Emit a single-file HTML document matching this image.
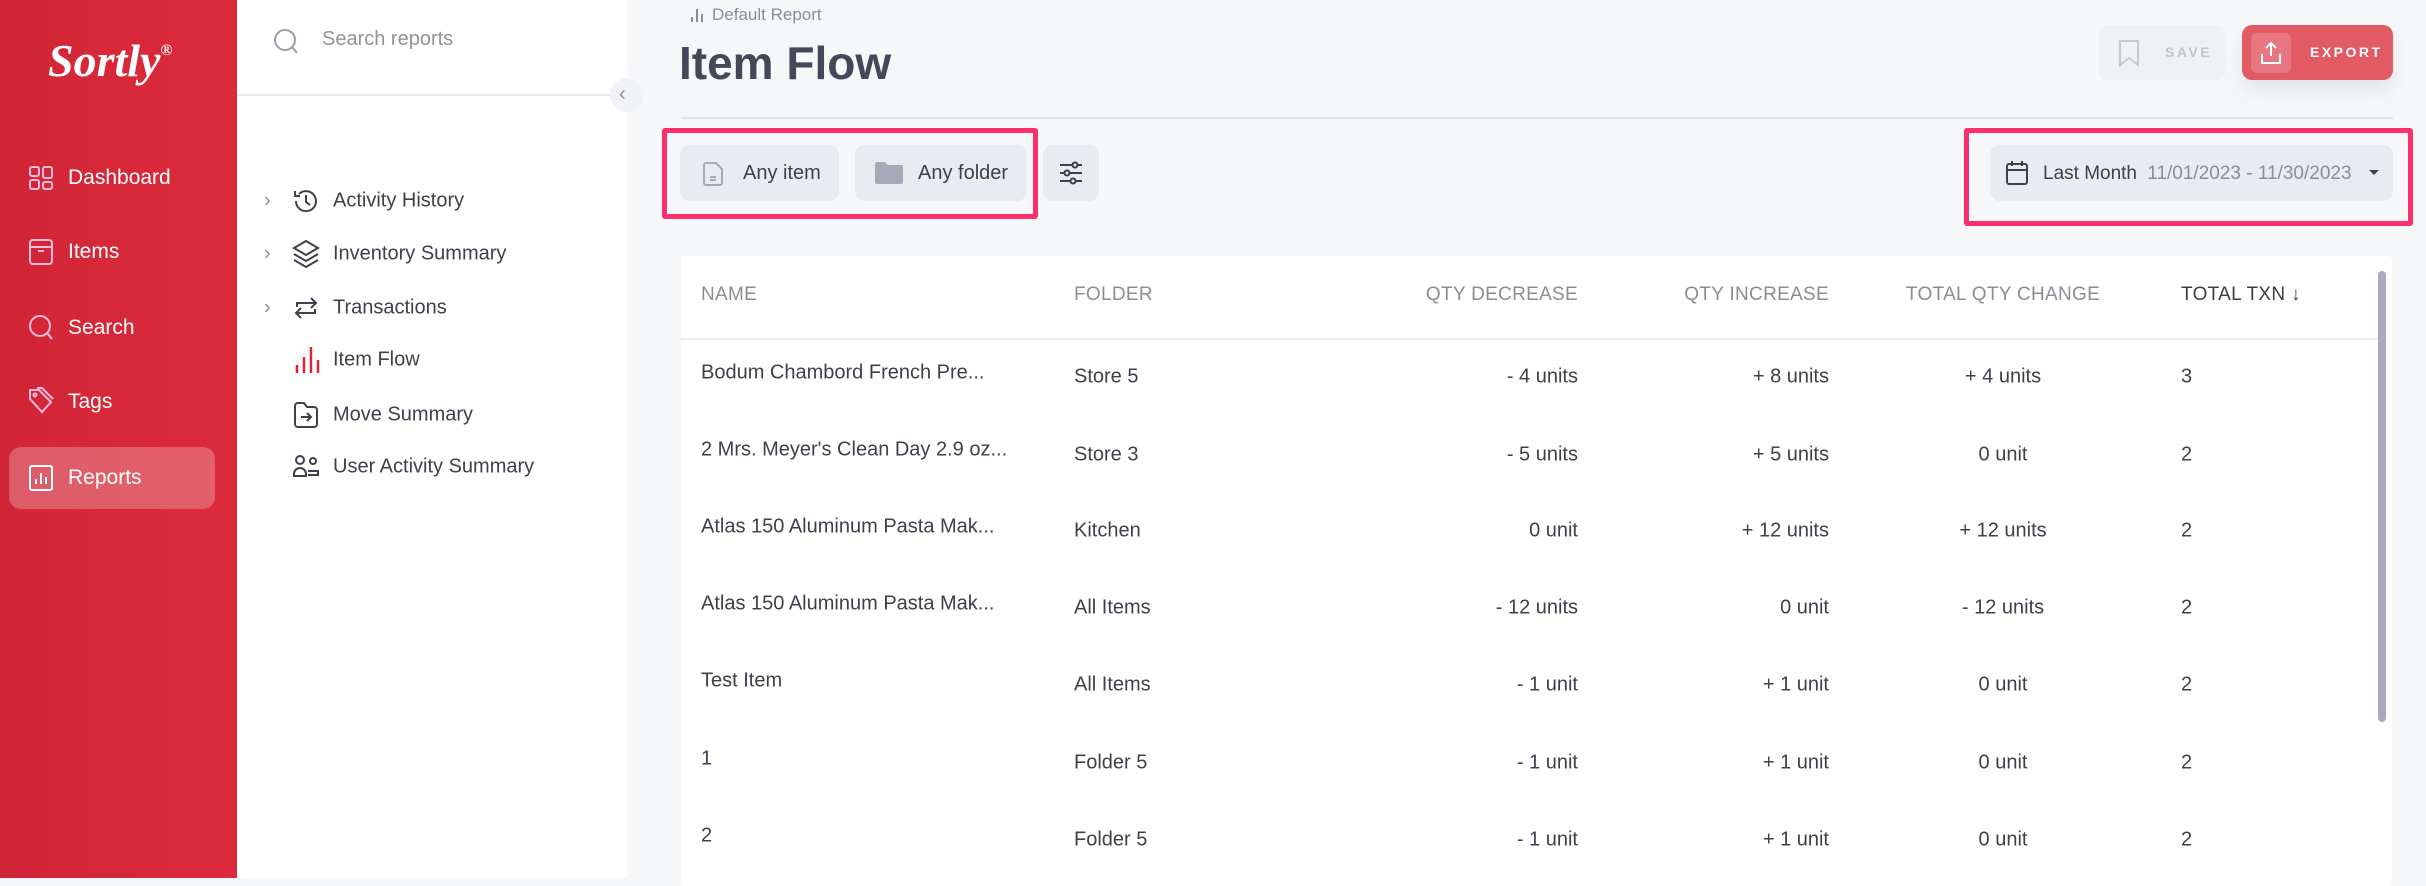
<!DOCTYPE html>
<html><head><meta charset="utf-8"><style>
*{margin:0;padding:0;box-sizing:border-box}
body{width:2426px;height:878px;overflow:hidden;background:#f5f7f9;font-family:"Liberation Sans",sans-serif;position:relative;color:#3d404d}
.a{position:absolute;white-space:nowrap}
.side{left:0;top:0;width:237px;height:878px;background:linear-gradient(90deg,#d12637,#dc2a3b)}
.nav{left:68px;color:#fff;font-size:21px;transform:translateY(-50%)}
.ni{left:28px;transform:translateY(-50%)}
.panel{left:237px;top:0;width:390px;height:878px;background:#fff}
.rl{left:333px;font-size:20px;color:#3d404d;transform:translateY(-50%)}
.ri{left:292px;transform:translateY(-50%)}
.chev{left:264px;transform:translateY(-50%)}
.btn{background:#e9ebf1;border-radius:10px}
.th{top:295px;transform:translateY(-50%);font-size:19px;color:#8a8d99;letter-spacing:.3px}
.td{transform:translateY(-50%);font-size:20px;color:#3d404d}
.r{text-align:right}
</style></head><body>
<div class="a side"></div>
<div class="a" style="left:48px;top:34px;color:#fff;font-family:'Liberation Serif',serif;font-style:italic;font-weight:bold;font-size:46px">Sortly<span style="font-size:16px;vertical-align:top;position:relative;top:8px">®</span></div>
<div class="a" style="left:9px;top:447px;width:206px;height:62px;border-radius:12px;background:rgba(255,255,255,.25)"></div>
<svg class="a ni" style="top:178px" width="26" height="26" viewBox="0 0 26 26" fill="none" stroke="#fbd" stroke-width="2"><rect x="2" y="2" width="9" height="9" rx="2"/><rect x="15" y="2" width="9" height="11" rx="2"/><rect x="2" y="15" width="9" height="9" rx="2"/><rect x="15" y="17" width="9" height="7" rx="2"/></svg>
<div class="a nav" style="top:178px">Dashboard</div>
<svg class="a ni" style="top:252px" width="26" height="28" viewBox="0 0 26 28" fill="none" stroke="#fbd" stroke-width="2"><rect x="2" y="2" width="22" height="24" rx="3"/><path d="M2 9h22M10 13h6"/></svg>
<div class="a nav" style="top:252px">Items</div>
<svg class="a ni" style="top:328px" width="26" height="28" viewBox="0 0 26 28" fill="none" stroke="#fbd" stroke-width="2"><circle cx="12" cy="12" r="10"/><path d="M19 19l5 6"/></svg>
<div class="a nav" style="top:328px">Search</div>
<svg class="a ni" style="top:402px" width="26" height="30" viewBox="0 0 26 30" fill="none" stroke="#fbd" stroke-width="2"><path d="M2 12V3h9l12 12-9 10z"/><circle cx="7" cy="8" r="1.5"/><path d="M9 1h5l11 11"/></svg>
<div class="a nav" style="top:402px">Tags</div>
<svg class="a ni" style="top:478px" width="26" height="28" viewBox="0 0 26 28" fill="none" stroke="#fff" stroke-width="2"><rect x="2" y="2" width="22" height="24" rx="2"/><path d="M8 20v-5M13 20V9M18 20v-7"/></svg>
<div class="a nav" style="top:478px">Reports</div>

<div class="a panel"></div>
<svg class="a" style="left:273px;top:28px" width="26" height="28" viewBox="0 0 26 28" fill="none" stroke="#9a9dab" stroke-width="2"><circle cx="12" cy="12" r="10"/><path d="M19 19l5 6"/></svg>
<div class="a" style="left:322px;top:28px;font-size:20px;color:#8f92a0">Search reports</div>
<div class="a" style="left:237px;top:94px;width:390px;height:2px;background:#e6e8ec"></div>
<div class="a" style="left:610px;top:78px;width:34px;height:34px;border-radius:50%;background:#f0f2f5"></div>
<div class="a" style="left:619px;top:83px;font-size:20px;color:#8a8d99">‹</div>
<div class="a chev" style="top:201px;color:#8a8d99;font-size:20px">›</div>
<div class="a chev" style="top:254px;color:#8a8d99;font-size:20px">›</div>
<div class="a chev" style="top:308px;color:#8a8d99;font-size:20px">›</div>
<svg class="a ri" style="top:201px" width="28" height="28" viewBox="0 0 28 28" fill="none" stroke="#3d404d" stroke-width="2"><path d="M4 14a10 10 0 1 0 3-7M3 4v5h5M14 8v7l4 3"/></svg>
<div class="a rl" style="top:201px">Activity History</div>
<svg class="a ri" style="top:254px" width="28" height="30" viewBox="0 0 28 30" fill="none" stroke="#3d404d" stroke-width="2"><path d="M14 2L2 9l12 7 12-7z"/><path d="M2 15l12 7 12-7M2 21l12 7 12-7"/></svg>
<div class="a rl" style="top:254px">Inventory Summary</div>
<svg class="a ri" style="top:308px" width="28" height="30" viewBox="0 0 28 30" fill="none" stroke="#3d404d" stroke-width="2"><path d="M5 14V10h18M19 5l5 5-5 5M23 16v4H5M9 25l-5-5 5-5"/></svg>
<div class="a rl" style="top:308px">Transactions</div>
<svg class="a ri" style="top:360px" width="28" height="30" viewBox="0 0 28 30" fill="none" stroke="#d6283a" stroke-width="2.5"><path d="M5 28v-8M12 28V12M19 28V2M26 28v-13"/></svg>
<div class="a rl" style="top:360px">Item Flow</div>
<svg class="a ri" style="top:415px" width="28" height="30" viewBox="0 0 28 30" fill="none" stroke="#3d404d" stroke-width="2"><path d="M3 6a3 3 0 0 1 3-3h6l3 4h7a3 3 0 0 1 3 3v14a3 3 0 0 1-3 3H6a3 3 0 0 1-3-3z"/><path d="M9 17h10M15 13l4 4-4 4"/></svg>
<div class="a rl" style="top:415px">Move Summary</div>
<svg class="a ri" style="top:467px" width="30" height="28" viewBox="0 0 30 28" fill="none" stroke="#3d404d" stroke-width="2"><circle cx="8" cy="7" r="4"/><circle cx="21" cy="8" r="3"/><path d="M2 21a6 6 0 0 1 12 0v2H2zM16 18h10v4H16"/></svg>
<div class="a rl" style="top:467px">User Activity Summary</div>

<svg class="a" style="left:690px;top:6px" width="14" height="16" viewBox="0 0 14 16" stroke="#8a8d99" stroke-width="2"><path d="M2 16v-5M7 16V3M12 16V8"/></svg>
<div class="a" style="left:712px;top:5px;font-size:17px;color:#8a8d99">Default Report</div>
<div class="a" style="left:679px;top:36px;font-size:46px;font-weight:bold;color:#444858">Item Flow</div>
<div class="a" style="left:681px;top:117px;width:1712px;height:2px;background:#e0e2e6"></div>

<div class="a" style="left:2098px;top:25px;width:128px;height:55px;border-radius:10px;background:#eff1f4"></div>
<svg class="a" style="left:2118px;top:39px" width="22" height="28" viewBox="0 0 22 28" fill="none" stroke="#c7c9d0" stroke-width="2"><path d="M2 2h18v24l-9-7-9 7z"/></svg>
<div class="a" style="left:2165px;top:44px;font-size:14px;font-weight:bold;letter-spacing:2.5px;color:#c3c5cc">SAVE</div>
<div class="a" style="left:2242px;top:25px;width:151px;height:55px;border-radius:10px;background:#e25a64;box-shadow:0 10px 20px rgba(0,0,0,.08)"></div>
<div class="a" style="left:2251px;top:33px;width:40px;height:40px;border-radius:6px;background:rgba(255,255,255,.18)"></div>
<svg class="a" style="left:2259px;top:40px" width="24" height="26" viewBox="0 0 24 26" fill="none" stroke="#fff" stroke-width="2"><path d="M12 16V3M7 8l5-5 5 5M3 14v9h18v-9"/></svg>
<div class="a" style="left:2310px;top:44px;font-size:14px;font-weight:bold;letter-spacing:2.5px;color:#fff">EXPORT</div>

<div class="a" style="left:662px;top:128px;width:376px;height:91px;border:5px solid #fb2f6c;border-radius:3px"></div>
<div class="a btn" style="left:680px;top:145px;width:159px;height:56px"></div>
<svg class="a" style="left:702px;top:161px" width="22" height="26" viewBox="0 0 22 26" fill="none" stroke="#a6a9b8" stroke-width="2"><path d="M4 2h10l6 6v14a2 2 0 0 1-2 2H4a2 2 0 0 1-2-2V4a2 2 0 0 1 2-2zM8 16h6M8 19h6"/></svg>
<div class="a" style="left:743px;top:162px;font-size:20px;color:#3d404d">Any item</div>
<div class="a btn" style="left:855px;top:145px;width:172px;height:56px"></div>
<svg class="a" style="left:875px;top:161px" width="28" height="24" viewBox="0 0 28 24"><path d="M0 3a2 2 0 0 1 2-2h8l3 3h13a2 2 0 0 1 2 2v15a2 2 0 0 1-2 2H2a2 2 0 0 1-2-2z" fill="#a6a9b8"/></svg>
<div class="a" style="left:918px;top:162px;font-size:20px;color:#3d404d">Any folder</div>
<div class="a btn" style="left:1043px;top:145px;width:56px;height:56px"></div>
<svg class="a" style="left:1058px;top:160px" width="26" height="26" viewBox="0 0 26 26" fill="none" stroke="#3d404d" stroke-width="2"><path d="M2 5h22M2 13h22M2 21h22"/><circle cx="17" cy="5" r="2.5" fill="#e9ebf1"/><circle cx="9" cy="13" r="2.5" fill="#e9ebf1"/><circle cx="15" cy="21" r="2.5" fill="#e9ebf1"/></svg>

<div class="a" style="left:1964px;top:128px;width:449px;height:98px;border:5px solid #fb2f6c;border-radius:3px"></div>
<div class="a btn" style="left:1990px;top:145px;width:403px;height:56px"></div>
<svg class="a" style="left:2005px;top:160px" width="24" height="26" viewBox="0 0 24 26" fill="none" stroke="#3d404d" stroke-width="2"><rect x="2" y="4" width="20" height="20" rx="2"/><path d="M2 10h20M7 1v5M17 1v5"/></svg>
<div class="a" style="left:2043px;top:163px;font-size:19px;color:#3d404d">Last Month <span style="color:#8a8d99;margin-left:5px">11/01/2023 - 11/30/2023</span></div>
<div class="a" style="left:2369px;top:170px;width:0;height:0;border-left:5px solid transparent;border-right:5px solid transparent;border-top:5px solid #3d404d"></div>

<div class="a" style="left:681px;top:256px;width:1711px;height:630px;background:#fff;border-radius:4px"></div>
<div class="a" style="left:681px;top:338px;width:1697px;height:2px;background:#eceef1"></div>
<div class="a" style="left:2378px;top:271px;width:8px;height:451px;border-radius:4px;background:#a9aabd"></div>
<div class="a th" style="left:701px">NAME</div>
<div class="a th" style="left:1074px">FOLDER</div>
<div class="a th r" style="right:848px">QTY DECREASE</div>
<div class="a th r" style="right:597px">QTY INCREASE</div>
<div class="a th" style="left:2003px;transform:translate(-50%,-50%)">TOTAL QTY CHANGE</div>
<div class="a th" style="left:2181px;color:#3a3d4a">TOTAL TXN ↓</div>

<div class="a td" style="left:701px;top:373px">Bodum Chambord French Pre...</div>
<div class="a td" style="left:1074px;top:377px">Store 5</div>
<div class="a td" style="right:848px;top:377px">- 4 units</div>
<div class="a td" style="right:597px;top:377px">+ 8 units</div>
<div class="a td" style="left:2003px;top:377px;transform:translate(-50%,-50%)">+ 4 units</div>
<div class="a td" style="left:2181px;top:377px">3</div>

<div class="a td" style="left:701px;top:450px">2 Mrs. Meyer's Clean Day 2.9 oz...</div>
<div class="a td" style="left:1074px;top:455px">Store 3</div>
<div class="a td" style="right:848px;top:455px">- 5 units</div>
<div class="a td" style="right:597px;top:455px">+ 5 units</div>
<div class="a td" style="left:2003px;top:455px;transform:translate(-50%,-50%)">0 unit</div>
<div class="a td" style="left:2181px;top:455px">2</div>

<div class="a td" style="left:701px;top:527px">Atlas 150 Aluminum Pasta Mak...</div>
<div class="a td" style="left:1074px;top:531px">Kitchen</div>
<div class="a td" style="right:848px;top:531px">0 unit</div>
<div class="a td" style="right:597px;top:531px">+ 12 units</div>
<div class="a td" style="left:2003px;top:531px;transform:translate(-50%,-50%)">+ 12 units</div>
<div class="a td" style="left:2181px;top:531px">2</div>

<div class="a td" style="left:701px;top:604px">Atlas 150 Aluminum Pasta Mak...</div>
<div class="a td" style="left:1074px;top:608px">All Items</div>
<div class="a td" style="right:848px;top:608px">- 12 units</div>
<div class="a td" style="right:597px;top:608px">0 unit</div>
<div class="a td" style="left:2003px;top:608px;transform:translate(-50%,-50%)">- 12 units</div>
<div class="a td" style="left:2181px;top:608px">2</div>

<div class="a td" style="left:701px;top:681px">Test Item</div>
<div class="a td" style="left:1074px;top:685px">All Items</div>
<div class="a td" style="right:848px;top:685px">- 1 unit</div>
<div class="a td" style="right:597px;top:685px">+ 1 unit</div>
<div class="a td" style="left:2003px;top:685px;transform:translate(-50%,-50%)">0 unit</div>
<div class="a td" style="left:2181px;top:685px">2</div>

<div class="a td" style="left:701px;top:759px">1</div>
<div class="a td" style="left:1074px;top:763px">Folder 5</div>
<div class="a td" style="right:848px;top:763px">- 1 unit</div>
<div class="a td" style="right:597px;top:763px">+ 1 unit</div>
<div class="a td" style="left:2003px;top:763px;transform:translate(-50%,-50%)">0 unit</div>
<div class="a td" style="left:2181px;top:763px">2</div>

<div class="a td" style="left:701px;top:836px">2</div>
<div class="a td" style="left:1074px;top:840px">Folder 5</div>
<div class="a td" style="right:848px;top:840px">- 1 unit</div>
<div class="a td" style="right:597px;top:840px">+ 1 unit</div>
<div class="a td" style="left:2003px;top:840px;transform:translate(-50%,-50%)">0 unit</div>
<div class="a td" style="left:2181px;top:840px">2</div>
</body></html>
